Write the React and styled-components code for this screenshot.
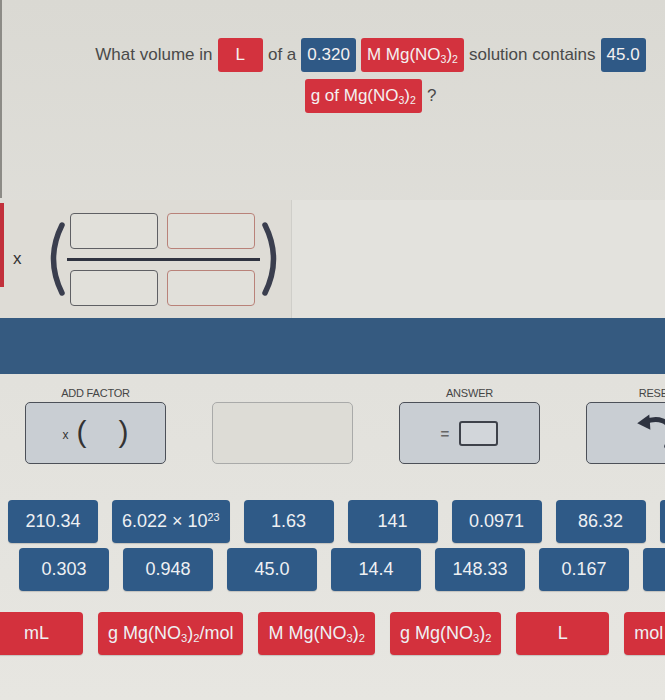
import React from "react";
import styled, { createGlobalStyle } from "styled-components";

const GlobalStyle = createGlobalStyle`
  html, body {
    margin: 0;
    padding: 0;
    background: #e2e1dc;
  }
  body {
    font-family: "Liberation Sans", Arial, sans-serif;
  }
`;

const MgNO3 = () => (
  <>
    Mg(NO<SubText>3</SubText>)<SubText>2</SubText>
  </>
);

const rowOne = ["210.34", "sci", "1.63", "141", "0.0971", "86.32", ""];
const rowTwo = ["0.303", "0.948", "45.0", "14.4", "148.33", "0.167", ""];

const App = () => {
  return (
    <Page>
      <GlobalStyle />
      <Question>
        <Words>What volume in</Words>
        <Chip red wide>
          <span>L</span>
        </Chip>
        <Words>of a</Words>
        <Chip>
          <span>0.320</span>
        </Chip>
        <Chip red>
          <span>
            M <MgNO3 />
          </span>
        </Chip>
        <Words>solution contains</Words>
        <Chip>
          <span>45.0</span>
        </Chip>
        <Chip red>
          <span>
            g of <MgNO3 />
          </span>
        </Chip>
        <Words>?</Words>
      </Question>

      <FactorStrip>
        <FactorPanel>
          <Times>x</Times>
          <Paren viewBox="0 0 22 76">
            <path d="M17 4 Q0 38 17 72" />
          </Paren>
          <Fraction>
            <BoxRow>
              <Slot />
              <Slot unit />
            </BoxRow>
            <Bar />
            <BoxRow>
              <Slot />
              <Slot unit />
            </BoxRow>
          </Fraction>
          <Paren viewBox="0 0 22 76">
            <path d="M5 4 Q22 38 5 72" />
          </Paren>
        </FactorPanel>
        <ResultArea />
      </FactorStrip>

      <Band />

      <Tools>
        <Tool>
          <ToolLabel>ADD FACTOR</ToolLabel>
          <ToolBox>
            <SmallX>x</SmallX>
            <BigParen>(</BigParen>
            <BigParen last>)</BigParen>
          </ToolBox>
        </Tool>
        <Tool>
          <ToolLabel />
          <ToolBox empty />
        </Tool>
        <Tool>
          <ToolLabel>ANSWER</ToolLabel>
          <ToolBox>
            <Equals>=</Equals>
            <AnswerSlot />
          </ToolBox>
        </Tool>
        <Tool>
          <ToolLabel>RESET</ToolLabel>
          <ToolBox>
            <UndoIcon viewBox="0 0 40 40">
              <path className="curve" d="M9 11 C20 6 32 9 34 22" />
              <path className="head" d="M2 12 L13 4 L14 18 Z" />
              <circle cx="29" cy="33" r="2.4" />
            </UndoIcon>
          </ToolBox>
        </Tool>
      </Tools>

      <TileRow start={8}>
        {rowOne.map((v, i) => (
          <Tile key={i} wide={v === "sci"}>
            {v === "sci" ? (
              <span>
                6.022 × 10<Sup>23</Sup>
              </span>
            ) : (
              <span>{v}</span>
            )}
          </Tile>
        ))}
      </TileRow>
      <TileRow start={19} top={5}>
        {rowTwo.map((v, i) => (
          <Tile key={i}>
            <span>{v}</span>
          </Tile>
        ))}
      </TileRow>

      <TileRow start={-10} top={21} gap={15}>
        <Tile red>
          <span>mL</span>
        </Tile>
        <Tile red>
          <span>
            g <MgNO3 />
            /mol
          </span>
        </Tile>
        <Tile red>
          <span>
            M <MgNO3 />
          </span>
        </Tile>
        <Tile red>
          <span>
            g <MgNO3 />
          </span>
        </Tile>
        <Tile red>
          <span>L</span>
        </Tile>
        <Tile red>
          <span>
            mol <MgNO3 />
          </span>
        </Tile>
      </TileRow>
    </Page>
  );
};

const Page = styled.div`
  width: 665px;
  height: 700px;
  overflow: hidden;
  background: linear-gradient(180deg, #dad9d3 0%, #e1e0db 45%, #e7e6e1 100%);
`;

const Question = styled.div`
  height: 198px;
  box-sizing: border-box;
  padding: 38px 4px 0 78px;
  border-left: 2px solid #8c8b86;
  display: flex;
  flex-wrap: wrap;
  align-content: flex-start;
  align-items: center;
  justify-content: center;
  column-gap: 5px;
  row-gap: 7px;
`;

const Words = styled.span`
  color: #4a4a4a;
  font-size: 17px;
`;

const Chip = styled.span`
  display: inline-flex;
  align-items: center;
  height: 34px;
  padding: ${(p) => (p.wide ? "0 18px" : "0 6px")};
  border-radius: 3px;
  font-size: 17px;
  color: #f4f0f0;
  background: ${(p) => (p.red ? "#d3323e" : "#2f5986")};
  white-space: nowrap;
`;

const SubText = styled.sub`
  font-size: 0.62em;
  vertical-align: -0.3em;
  line-height: 0;
`;

const Sup = styled.sup`
  font-size: 0.6em;
  vertical-align: 0.55em;
  line-height: 0;
`;

const FactorStrip = styled.div`
  display: flex;
  height: 118px;
  margin-top: 2px;
`;

const FactorPanel = styled.div`
  position: relative;
  width: 292px;
  box-sizing: border-box;
  padding-left: 13px;
  display: flex;
  align-items: center;
  background: #dedcd6;
  border-right: 1px solid #cfcec9;

  &::before {
    content: "";
    position: absolute;
    left: 0;
    top: 3px;
    width: 4px;
    height: 84px;
    background: #c2303b;
  }
`;

const ResultArea = styled.div`
  flex: 1;
  background: #e3e2dd;
`;

const Times = styled.span`
  font-size: 17px;
  color: #333;
  width: 12px;
  margin-right: 20px;
`;

const Paren = styled.svg`
  width: 22px;
  height: 76px;
  fill: none;
  stroke: #3a3e4e;
  stroke-width: 5.5;
  stroke-linecap: round;
`;

const Fraction = styled.div`
  display: flex;
  flex-direction: column;
  width: 193px;
`;

const BoxRow = styled.div`
  display: flex;
  gap: 9px;
  padding: 0 3px;
`;

const Slot = styled.div`
  width: 88px;
  height: 36px;
  box-sizing: border-box;
  border-radius: 4px;
  border: 1.5px solid ${(p) => (p.unit ? "#b98279" : "#5f6064")};
  background: #e1e0da;
`;

const Bar = styled.div`
  height: 3px;
  margin: 9px 0;
  background: #2f3340;
`;

const Band = styled.div`
  height: 56px;
  background: #355a80;
`;

const Tools = styled.div`
  display: grid;
  grid-template-columns: repeat(4, 141px);
  column-gap: 46px;
  padding: 13px 0 0 25px;
`;

const Tool = styled.div`
  display: flex;
  flex-direction: column;
  align-items: center;
`;

const ToolLabel = styled.div`
  height: 14px;
  font-size: 11px;
  color: #454545;
  text-align: center;
  letter-spacing: -0.2px;
`;

const ToolBox = styled.div`
  width: 141px;
  height: 62px;
  box-sizing: border-box;
  margin-top: 1px;
  border-radius: 5px;
  border: ${(p) => (p.empty ? "1.5px solid #a9aaa9" : "1.5px solid #4c5058")};
  background: ${(p) => (p.empty ? "#dddcd6" : "#c9ced3")};
  display: flex;
  align-items: center;
  justify-content: center;
`;

const SmallX = styled.span`
  font-size: 12px;
  color: #333;
  margin: 4px 6px 0 0;
`;

const BigParen = styled.span`
  font-size: 30px;
  color: #333;
  margin: ${(p) => (p.last ? "0 0 3px 0" : "0 32px 3px 2px")};
`;

const Equals = styled.span`
  font-size: 15px;
  color: #666;
  font-weight: bold;
  margin-right: 10px;
`;

const AnswerSlot = styled.div`
  width: 39px;
  height: 25px;
  box-sizing: border-box;
  border: 2px solid #3e424a;
  border-radius: 3px;
  background: #d2d6da;
`;

const UndoIcon = styled.svg`
  width: 44px;
  height: 44px;
  flex: none;
  margin-top: -2px;
  fill: #2e3340;

  .curve {
    fill: none;
    stroke: #2e3340;
    stroke-width: 4.5;
  }
`;

const TileRow = styled.div`
  display: flex;
  gap: ${(p) => p.gap ?? 14}px;
  margin-left: ${(p) => p.start}px;
  margin-top: ${(p) => p.top ?? 36}px;
  white-space: nowrap;
`;

const Tile = styled.div`
  flex: none;
  min-width: ${(p) => (p.wide ? "115px" : p.red ? "93px" : "90px")};
  height: 43px;
  box-sizing: border-box;
  padding: 0 10px;
  display: flex;
  align-items: center;
  justify-content: center;
  border-radius: 4px;
  font-size: 18px;
  color: #eef0f3;
  background: ${(p) => (p.red ? "#d3313d" : "#2f5a87")};
  box-shadow: 0 1px 1px rgba(0, 0, 0, 0.15);
`;

export default App;
